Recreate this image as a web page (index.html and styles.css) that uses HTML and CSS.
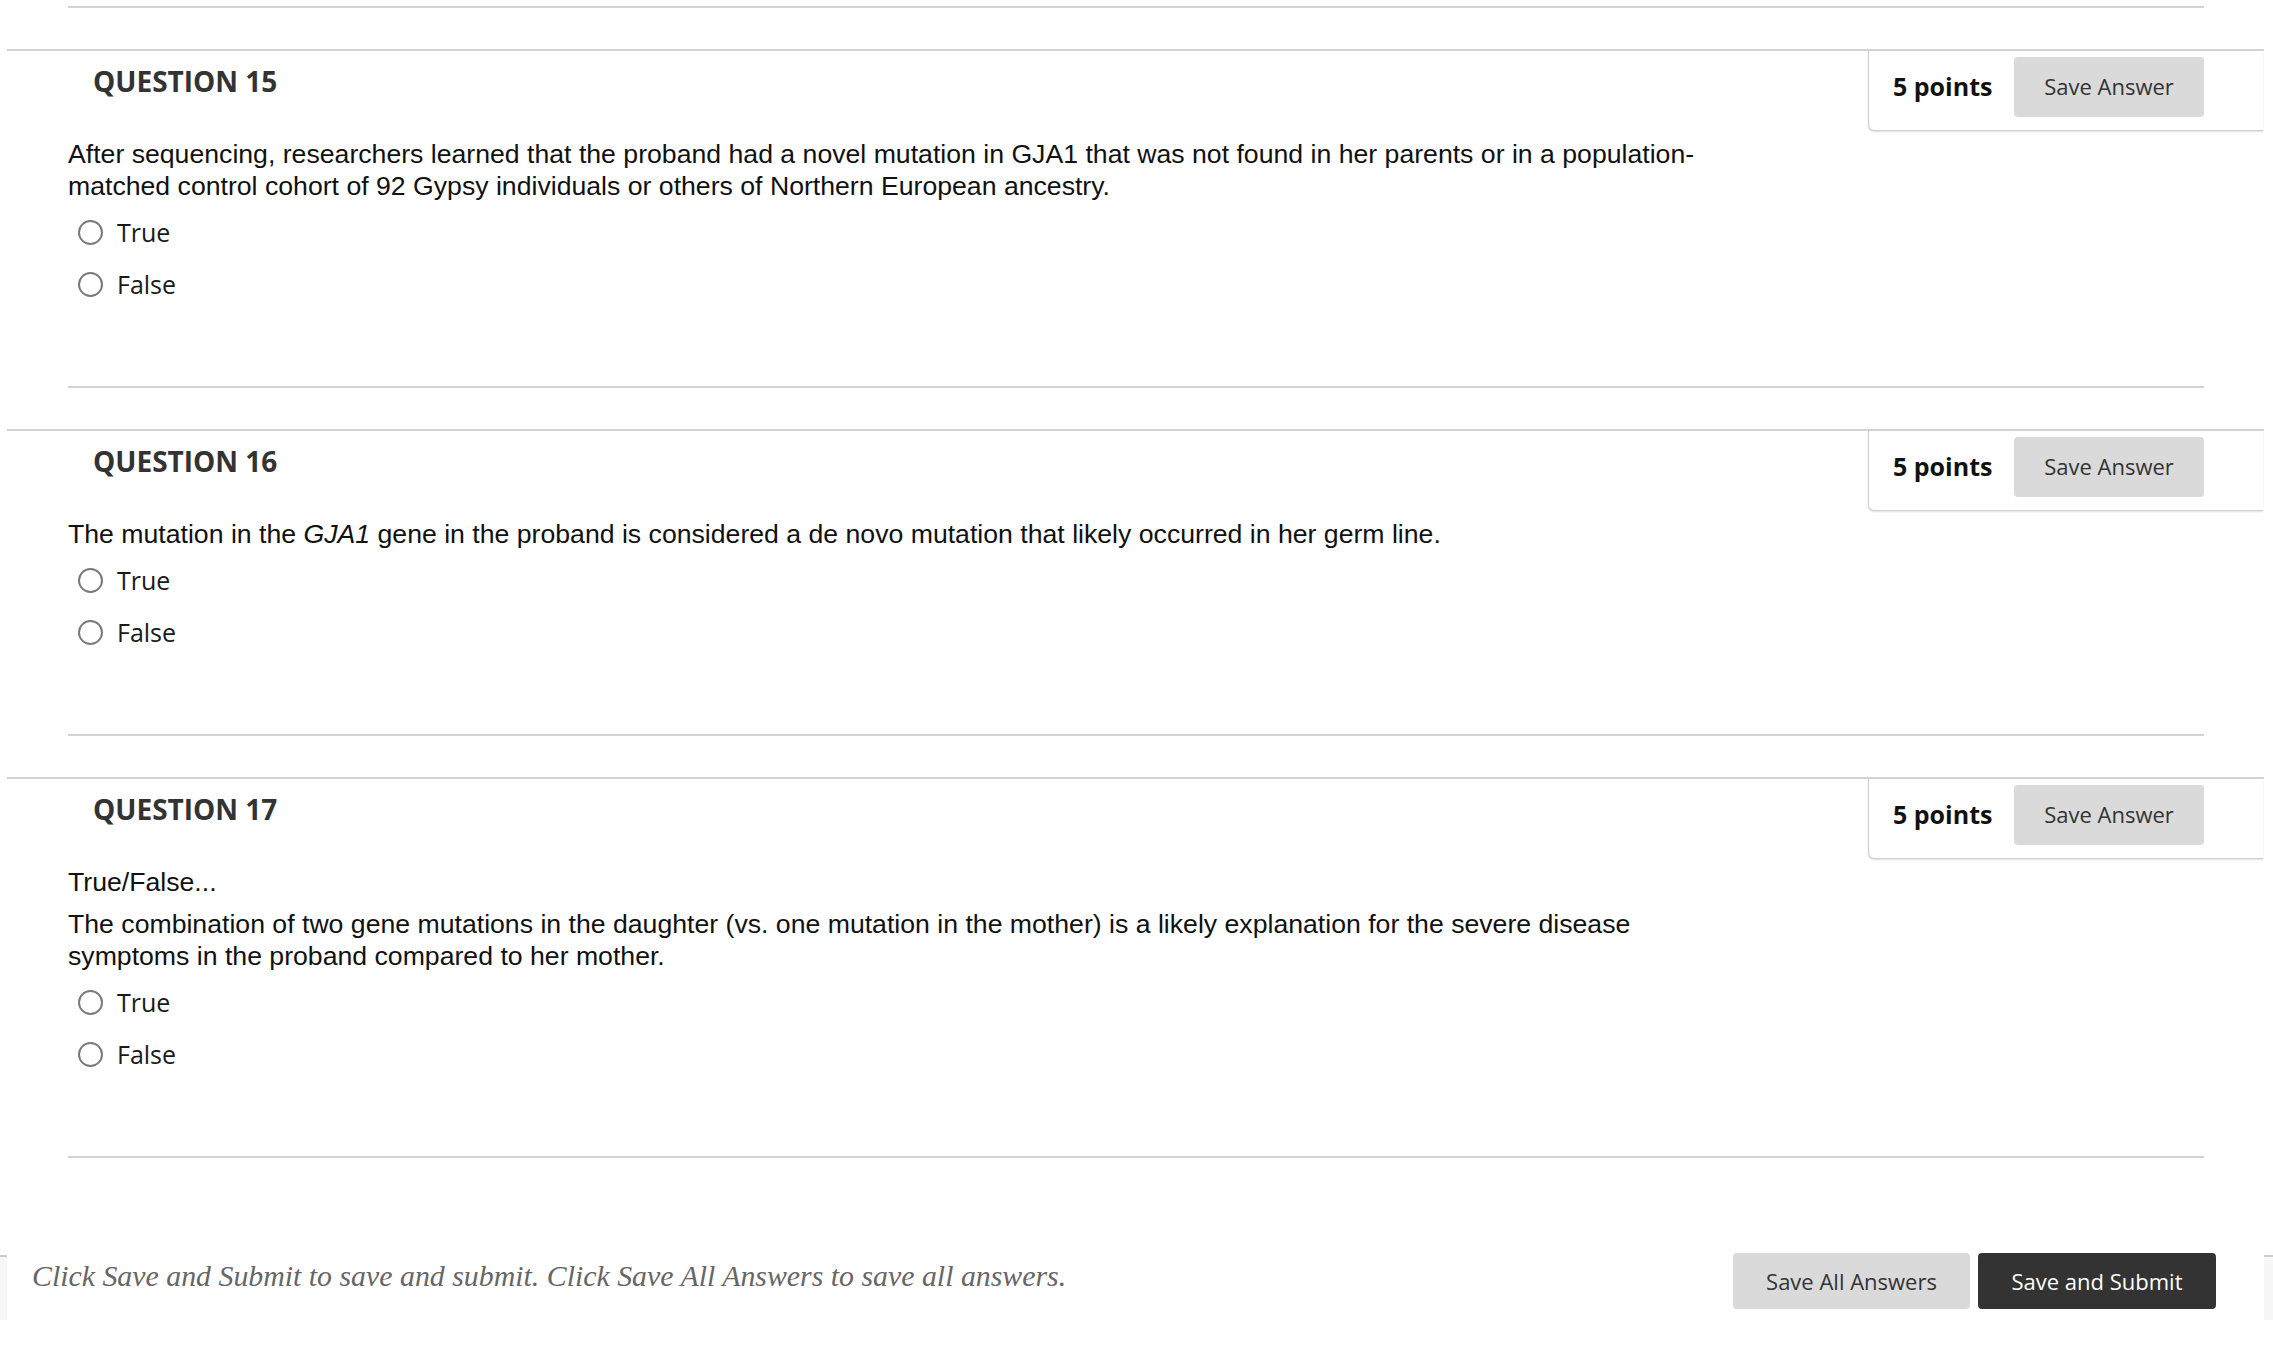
FILE: index.html
```html
<!DOCTYPE html>
<html lang="en">
<head>
<meta charset="utf-8">
<title>Test</title>
<link rel="stylesheet" href="styles.css">
</head>
<body>
<div class="page">
  <div class="rule"></div>

  <section class="question">
    <div class="q-head">
      <h2 class="q-title">QUESTION 15</h2>
      <div class="points-box">
        <span class="points">5 points</span>
        <button class="btn btn-light btn-save">Save Answer</button>
      </div>
    </div>
    <div class="q-body">
      <p class="q-text">After sequencing, researchers learned that the proband had a novel mutation in GJA1 that was not found in her parents or in a population-matched control cohort of 92 Gypsy individuals or others of Northern European ancestry.</p>
      <ul class="options">
        <li class="option"><span class="radio"></span><span class="opt-label">True</span></li>
        <li class="option"><span class="radio"></span><span class="opt-label">False</span></li>
      </ul>
    </div>
    <div class="rule rule-end"></div>
  </section>

  <section class="question">
    <div class="q-head">
      <h2 class="q-title">QUESTION 16</h2>
      <div class="points-box">
        <span class="points">5 points</span>
        <button class="btn btn-light btn-save">Save Answer</button>
      </div>
    </div>
    <div class="q-body">
      <p class="q-text">The mutation in the <em>GJA1</em> gene in the proband is considered a de novo mutation that likely occurred in her germ line.</p>
      <ul class="options">
        <li class="option"><span class="radio"></span><span class="opt-label">True</span></li>
        <li class="option"><span class="radio"></span><span class="opt-label">False</span></li>
      </ul>
    </div>
    <div class="rule rule-end"></div>
  </section>

  <section class="question">
    <div class="q-head">
      <h2 class="q-title">QUESTION 17</h2>
      <div class="points-box">
        <span class="points">5 points</span>
        <button class="btn btn-light btn-save">Save Answer</button>
      </div>
    </div>
    <div class="q-body">
      <p class="q-text">True/False...</p>
      <p class="q-text q-text-next">The combination of two gene mutations in the daughter (vs. one mutation in the mother) is a likely explanation for the severe disease symptoms in the proband compared to her mother.</p>
      <ul class="options">
        <li class="option"><span class="radio"></span><span class="opt-label">True</span></li>
        <li class="option"><span class="radio"></span><span class="opt-label">False</span></li>
      </ul>
    </div>
    <div class="rule rule-end"></div>
  </section>
</div>

<div class="footer">
  <div class="footer-inner">
    <p class="footer-note">Click Save and Submit to save and submit. Click Save All Answers to save all answers.</p>
    <div class="footer-actions">
      <button class="btn btn-light btn-footer">Save All Answers</button>
      <button class="btn btn-dark btn-footer">Save and Submit</button>
    </div>
  </div>
</div>
</body>
</html>
```

FILE: styles.css
```css
html, body {
  margin: 0;
  padding: 0;
  background: #ffffff;
}

.page {
  margin: 0 9px 0 7px;
  padding-top: 6px;
}

.rule {
  height: 2px;
  background: #d3d3d3;
  margin: 0 60px 0 61px;
}

.rule-end {
  margin-top: 82px;
}

.question {
  margin-top: 41px;
  border-top: 2px solid #d3d3d3;
}

.q-head {
  display: flex;
  justify-content: space-between;
  align-items: flex-start;
}

.q-title {
  margin: 11px 0 0 86px;
  font-family: "Open Sans", "Liberation Sans", sans-serif;
  font-weight: 700;
  font-size: 28px;
  line-height: normal;
  color: #333333;
}

.points-box {
  width: 395px;
  box-sizing: border-box;
  margin-right: 1px;
  display: flex;
  align-items: center;
  justify-content: space-between;
  padding: 6px 59px 13px 24px;
  border-left: 1px solid #cfcfcf;
  border-bottom: 1px solid #cfcfcf;
  border-bottom-left-radius: 6px;
  box-shadow: 0 1px 2px rgba(0, 0, 0, 0.12);
  background: #ffffff;
}

.points {
  font-family: "Open Sans", "Liberation Sans", sans-serif;
  font-weight: 700;
  font-size: 25px;
  color: #111111;
  margin-top: -2px;
}

.btn {
  font-family: "Open Sans", "Liberation Sans", sans-serif;
  font-size: 22px;
  border: none;
  border-radius: 4px;
  padding: 0;
  cursor: pointer;
}

.btn-light {
  background: #dadada;
  color: #333333;
}

.btn-dark {
  background: #333333;
  color: #ffffff;
}

.btn-save {
  width: 190px;
  height: 60px;
  padding-bottom: 2px;
}

.q-body {
  padding-left: 61px;
  margin-top: 7px;
}

.q-text {
  margin: 0;
  max-width: 1660px;
  font-family: "Liberation Sans", Arial, sans-serif;
  font-size: 26.65px;
  line-height: 32px;
  color: #111111;
}

.q-text-next {
  margin-top: 10px;
}

.options {
  list-style: none;
  margin: 10px 0 0;
  padding: 0 0 0 10px;
}

.option {
  display: flex;
  align-items: center;
  height: 40px;
  gap: 14px;
}

.option + .option {
  margin-top: 12px;
}

.radio {
  width: 25px;
  height: 25px;
  box-sizing: border-box;
  border: 2px solid #7a7a7a;
  border-radius: 50%;
  background: #ffffff;
}

.opt-label {
  font-family: "Open Sans", "Liberation Sans", sans-serif;
  font-size: 25px;
  color: #1a1a1a;
}

.footer {
  margin-top: 97px;
  border-top: 2px solid #cccccc;
  background: #f7f7f7;
}

.footer-inner {
  margin: -4px 9px 0 7px;
  height: 67px;
  background: #ffffff;
  display: flex;
  justify-content: space-between;
  align-items: flex-start;
  padding: 0 48px 0 25px;
}

.footer-note {
  margin: 6px 0 0;
  font-family: "Liberation Serif", "Times New Roman", serif;
  font-style: italic;
  font-size: 29.85px;
  line-height: 33px;
  color: #666666;
}

.footer-actions {
  display: flex;
  gap: 8px;
}

.btn-footer {
  height: 56px;
  width: 237px;
}

.btn-footer.btn-dark {
  width: 238px;
}
```
